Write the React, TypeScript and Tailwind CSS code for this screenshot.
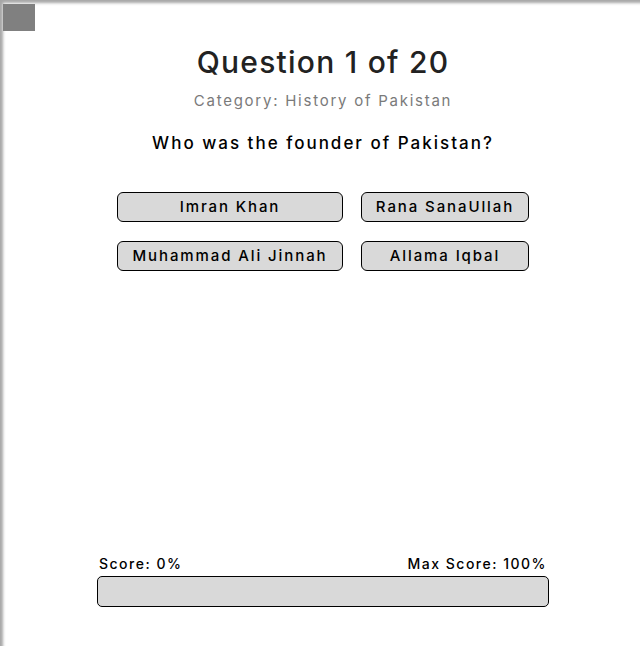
const options = ["Imran Khan", "Rana SanaUllah", "Muhammad Ali Jinnah", "Allama Iqbal"];

export default function App() {
  return (
    <div className="relative flex min-h-[646px] w-[640px] flex-col items-center bg-white pl-[6px] font-['Inter','Noto_Sans',sans-serif] shadow-[inset_3px_3px_3px_rgba(0,0,0,0.35)]">
      {/* corner block */}
      <div className="absolute left-[3px] top-[4px] h-[27px] w-[32px] bg-[#808080]" />

      <h1 className="mt-[44px] text-[30px] font-medium leading-[36px] tracking-[1.25px] text-[#222]">
        Question 1 of 20
      </h1>
      <p className="mt-[11px] text-[15px] leading-[20px] tracking-[1.75px] text-[#7a7a7a]">
        Category: History of Pakistan
      </p>
      <p className="mt-[20px] text-[17px] font-medium leading-[24px] tracking-[2px] text-black">
        Who was the founder of Pakistan?
      </p>

      <div className="mt-[37px] grid grid-cols-[226px_168px] gap-x-[18px] gap-y-[19px]">
        {options.map((o) => (
          <button
            key={o}
            className="h-[30px] rounded-[6px] border border-black bg-[#d9d9d9] text-[15px] font-medium tracking-[1.9px] text-black"
          >
            {o}
          </button>
        ))}
      </div>

      <div className="mt-auto mb-[39px] w-[452px]">
        <div className="flex justify-between px-[2px] text-[14px] font-medium leading-[20px] tracking-[1.5px] text-black">
          <span>Score: 0%</span>
          <span>Max Score: 100%</span>
        </div>
        <div className="mt-[2px] h-[31px] rounded-[5px] border border-black bg-[#d9d9d9]" />
      </div>
    </div>
  );
}
